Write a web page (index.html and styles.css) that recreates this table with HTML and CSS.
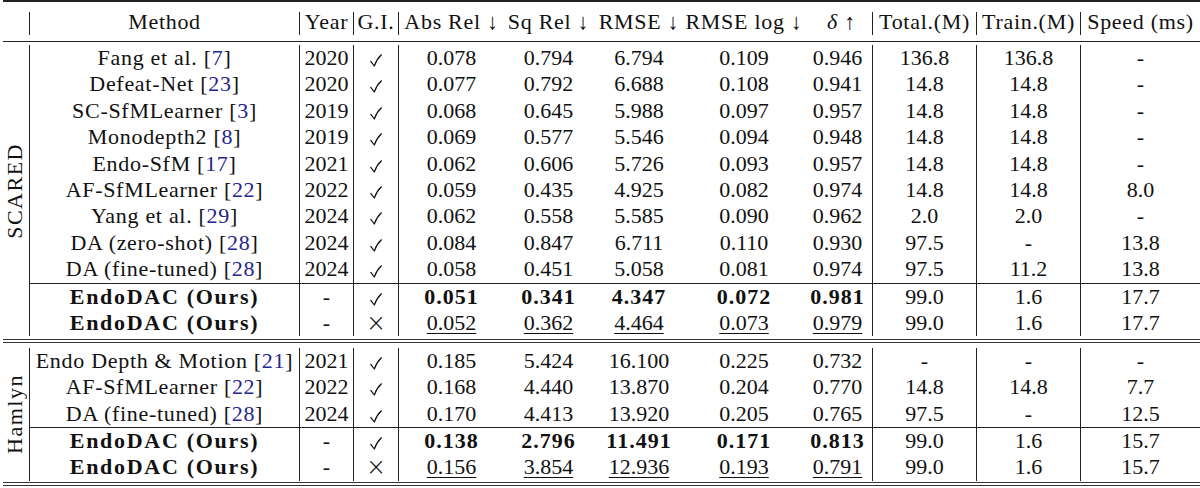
FILE: index.html
```html
<!DOCTYPE html>
<html>
<head>
<meta charset="utf-8">
<link rel="stylesheet" href="styles.css">
</head>
<body>
<div class="table">
  <div class="rule-top"></div>
  <div class="head">
    <div class="hc grp"></div>
    <div class="hc t">Method</div>
    <div class="hc t bl">Year</div>
    <div class="hc t bl">G.I.</div>
    <div class="hc t bl">Abs Rel ↓</div>
    <div class="hc t">Sq Rel ↓</div>
    <div class="hc t">RMSE ↓</div>
    <div class="hc t">RMSE log ↓</div>
    <div class="hc t hd"><i>δ</i> ↑</div>
    <div class="hc t bl">Total.(M)</div>
    <div class="hc t bl">Train.(M)</div>
    <div class="hc t bl">Speed (ms)</div>
  </div>
  <div class="rule-mid"></div>

  <div class="section">
    <div class="group"><span>SCARED</span></div>
    <div class="rows">
      <div class="row"><div class="c t">Fang et al. [<span class="cite">7</span>]</div><div class="c bl">2020</div><div class="c bl"><svg class="chk" viewBox="0 0 12 13"><path d="M0.8 7.4 L4.3 12 Q6.6 5.2 11.4 0.8"/></svg></div><div class="c bl">0.078</div><div class="c">0.794</div><div class="c">6.794</div><div class="c">0.109</div><div class="c">0.946</div><div class="c bl">136.8</div><div class="c bl">136.8</div><div class="c bl">-</div></div>
      <div class="row"><div class="c t">Defeat-Net [<span class="cite">23</span>]</div><div class="c bl">2020</div><div class="c bl"><svg class="chk" viewBox="0 0 12 13"><path d="M0.8 7.4 L4.3 12 Q6.6 5.2 11.4 0.8"/></svg></div><div class="c bl">0.077</div><div class="c">0.792</div><div class="c">6.688</div><div class="c">0.108</div><div class="c">0.941</div><div class="c bl">14.8</div><div class="c bl">14.8</div><div class="c bl">-</div></div>
      <div class="row"><div class="c t">SC-SfMLearner [<span class="cite">3</span>]</div><div class="c bl">2019</div><div class="c bl"><svg class="chk" viewBox="0 0 12 13"><path d="M0.8 7.4 L4.3 12 Q6.6 5.2 11.4 0.8"/></svg></div><div class="c bl">0.068</div><div class="c">0.645</div><div class="c">5.988</div><div class="c">0.097</div><div class="c">0.957</div><div class="c bl">14.8</div><div class="c bl">14.8</div><div class="c bl">-</div></div>
      <div class="row"><div class="c t">Monodepth2 [<span class="cite">8</span>]</div><div class="c bl">2019</div><div class="c bl"><svg class="chk" viewBox="0 0 12 13"><path d="M0.8 7.4 L4.3 12 Q6.6 5.2 11.4 0.8"/></svg></div><div class="c bl">0.069</div><div class="c">0.577</div><div class="c">5.546</div><div class="c">0.094</div><div class="c">0.948</div><div class="c bl">14.8</div><div class="c bl">14.8</div><div class="c bl">-</div></div>
      <div class="row"><div class="c t">Endo-SfM [<span class="cite">17</span>]</div><div class="c bl">2021</div><div class="c bl"><svg class="chk" viewBox="0 0 12 13"><path d="M0.8 7.4 L4.3 12 Q6.6 5.2 11.4 0.8"/></svg></div><div class="c bl">0.062</div><div class="c">0.606</div><div class="c">5.726</div><div class="c">0.093</div><div class="c">0.957</div><div class="c bl">14.8</div><div class="c bl">14.8</div><div class="c bl">-</div></div>
      <div class="row"><div class="c t">AF-SfMLearner [<span class="cite">22</span>]</div><div class="c bl">2022</div><div class="c bl"><svg class="chk" viewBox="0 0 12 13"><path d="M0.8 7.4 L4.3 12 Q6.6 5.2 11.4 0.8"/></svg></div><div class="c bl">0.059</div><div class="c">0.435</div><div class="c">4.925</div><div class="c">0.082</div><div class="c">0.974</div><div class="c bl">14.8</div><div class="c bl">14.8</div><div class="c bl">8.0</div></div>
      <div class="row"><div class="c t">Yang et al. [<span class="cite">29</span>]</div><div class="c bl">2024</div><div class="c bl"><svg class="chk" viewBox="0 0 12 13"><path d="M0.8 7.4 L4.3 12 Q6.6 5.2 11.4 0.8"/></svg></div><div class="c bl">0.062</div><div class="c">0.558</div><div class="c">5.585</div><div class="c">0.090</div><div class="c">0.962</div><div class="c bl">2.0</div><div class="c bl">2.0</div><div class="c bl">-</div></div>
      <div class="row"><div class="c t">DA (zero-shot) [<span class="cite">28</span>]</div><div class="c bl">2024</div><div class="c bl"><svg class="chk" viewBox="0 0 12 13"><path d="M0.8 7.4 L4.3 12 Q6.6 5.2 11.4 0.8"/></svg></div><div class="c bl">0.084</div><div class="c">0.847</div><div class="c">6.711</div><div class="c">0.110</div><div class="c">0.930</div><div class="c bl">97.5</div><div class="c bl">-</div><div class="c bl">13.8</div></div>
      <div class="row"><div class="c t">DA (fine-tuned) [<span class="cite">28</span>]</div><div class="c bl">2024</div><div class="c bl"><svg class="chk" viewBox="0 0 12 13"><path d="M0.8 7.4 L4.3 12 Q6.6 5.2 11.4 0.8"/></svg></div><div class="c bl">0.058</div><div class="c">0.451</div><div class="c">5.058</div><div class="c">0.081</div><div class="c">0.974</div><div class="c bl">97.5</div><div class="c bl">11.2</div><div class="c bl">13.8</div></div>
      <div class="cline"></div>
      <div class="row"><div class="c t b">EndoDAC (Ours)</div><div class="c bl">-</div><div class="c bl"><svg class="chk" viewBox="0 0 12 13"><path d="M0.8 7.4 L4.3 12 Q6.6 5.2 11.4 0.8"/></svg></div><div class="c bl bn">0.051</div><div class="c bn">0.341</div><div class="c bn">4.347</div><div class="c bn">0.072</div><div class="c bn">0.981</div><div class="c bl">99.0</div><div class="c bl">1.6</div><div class="c bl">17.7</div></div>
      <div class="row"><div class="c t b">EndoDAC (Ours)</div><div class="c bl">-</div><div class="c bl x">×</div><div class="c bl"><u>0.052</u></div><div class="c"><u>0.362</u></div><div class="c"><u>4.464</u></div><div class="c"><u>0.073</u></div><div class="c"><u>0.979</u></div><div class="c bl">99.0</div><div class="c bl">1.6</div><div class="c bl">17.7</div></div>
    </div>
  </div>

  <div class="rule-double"></div>

  <div class="section">
    <div class="group"><span>Hamlyn</span></div>
    <div class="rows">
      <div class="row"><div class="c t">Endo Depth &amp; Motion [<span class="cite">21</span>]</div><div class="c bl">2021</div><div class="c bl"><svg class="chk" viewBox="0 0 12 13"><path d="M0.8 7.4 L4.3 12 Q6.6 5.2 11.4 0.8"/></svg></div><div class="c bl">0.185</div><div class="c">5.424</div><div class="c">16.100</div><div class="c">0.225</div><div class="c">0.732</div><div class="c bl">-</div><div class="c bl">-</div><div class="c bl">-</div></div>
      <div class="row"><div class="c t">AF-SfMLearner [<span class="cite">22</span>]</div><div class="c bl">2022</div><div class="c bl"><svg class="chk" viewBox="0 0 12 13"><path d="M0.8 7.4 L4.3 12 Q6.6 5.2 11.4 0.8"/></svg></div><div class="c bl">0.168</div><div class="c">4.440</div><div class="c">13.870</div><div class="c">0.204</div><div class="c">0.770</div><div class="c bl">14.8</div><div class="c bl">14.8</div><div class="c bl">7.7</div></div>
      <div class="row"><div class="c t">DA (fine-tuned) [<span class="cite">28</span>]</div><div class="c bl">2024</div><div class="c bl"><svg class="chk" viewBox="0 0 12 13"><path d="M0.8 7.4 L4.3 12 Q6.6 5.2 11.4 0.8"/></svg></div><div class="c bl">0.170</div><div class="c">4.413</div><div class="c">13.920</div><div class="c">0.205</div><div class="c">0.765</div><div class="c bl">97.5</div><div class="c bl">-</div><div class="c bl">12.5</div></div>
      <div class="cline"></div>
      <div class="row"><div class="c t b">EndoDAC (Ours)</div><div class="c bl">-</div><div class="c bl"><svg class="chk" viewBox="0 0 12 13"><path d="M0.8 7.4 L4.3 12 Q6.6 5.2 11.4 0.8"/></svg></div><div class="c bl bn">0.138</div><div class="c bn">2.796</div><div class="c bn">11.491</div><div class="c bn">0.171</div><div class="c bn">0.813</div><div class="c bl">99.0</div><div class="c bl">1.6</div><div class="c bl">15.7</div></div>
      <div class="row"><div class="c t b">EndoDAC (Ours)</div><div class="c bl">-</div><div class="c bl x">×</div><div class="c bl"><u>0.156</u></div><div class="c"><u>3.854</u></div><div class="c"><u>12.936</u></div><div class="c"><u>0.193</u></div><div class="c"><u>0.791</u></div><div class="c bl">99.0</div><div class="c bl">1.6</div><div class="c bl">15.7</div></div>
    </div>
  </div>

  <div class="rule-double bottom"></div>
</div>
</body>
</html>
```

FILE: styles.css
```css
* { box-sizing: border-box; }
body {
  margin: 0;
  background: #fff;
}
.table {
  width: 1200px;
  font-family: "Liberation Serif", "DejaVu Serif", serif;
  font-size: 22px;
  color: #111;
}
.rule-top {
  height: 2px;
  background: #222;
  margin-left: 3px;
}
.head {
  display: grid;
  grid-template-columns: 30px 269px 54px 45px 106px 89px 92px 118px 69px 104px 104px 120px;
  padding: 10px 0 6px;
}
.hc {
  height: 23px;
  line-height: 20px;
  text-align: center;
  white-space: nowrap;
}
.hc.hd {
  padding-left: 8px;
}
.hc.grp {
  border-right: 1px solid #222;
}
.rule-mid {
  height: 1px;
  background: #222;
  margin-left: 3px;
  margin-bottom: 3px;
}
.section {
  display: grid;
  grid-template-columns: 30px 1170px;
}
.group {
  border-right: 1px solid #222;
  display: flex;
  align-items: center;
  justify-content: center;
}
.group span {
  writing-mode: vertical-rl;
  transform: rotate(180deg);
  letter-spacing: 1.5px;
  line-height: 30px;
}
.row {
  display: grid;
  grid-template-columns: 269px 54px 45px 106px 89px 92px 118px 69px 104px 104px 120px;
  height: 26.4px;
}
.c {
  text-align: center;
  white-space: nowrap;
  line-height: 26.4px;
  height: 26.4px;
}
.bl {
  border-left: 1px solid #222;
}
.t {
  letter-spacing: 0.7px;
}
.b {
  font-weight: bold;
  letter-spacing: 1.7px;
}
.bn {
  font-weight: bold;
  letter-spacing: 1px;
}
.cite {
  color: #25258f;
}
.chk {
  width: 12px;
  height: 13px;
  vertical-align: -2px;
  fill: none;
  stroke: #111;
  stroke-width: 1.2;
  stroke-linecap: round;
  stroke-linejoin: round;
}
.x {
  font-family: "DejaVu Sans", sans-serif;
  font-size: 24px;
  font-weight: 300;
}
u {
  text-decoration: underline;
  text-decoration-thickness: 1px;
  text-underline-offset: 3px;
}
.cline {
  height: 1px;
  background: #222;
}
.rule-double {
  height: 4px;
  border-top: 1px solid #333;
  border-bottom: 1px solid #333;
  margin: 3px 0 4.6px 3px;
}
.rule-double.bottom {
  margin: 1px 0 0 3px;
}
```
